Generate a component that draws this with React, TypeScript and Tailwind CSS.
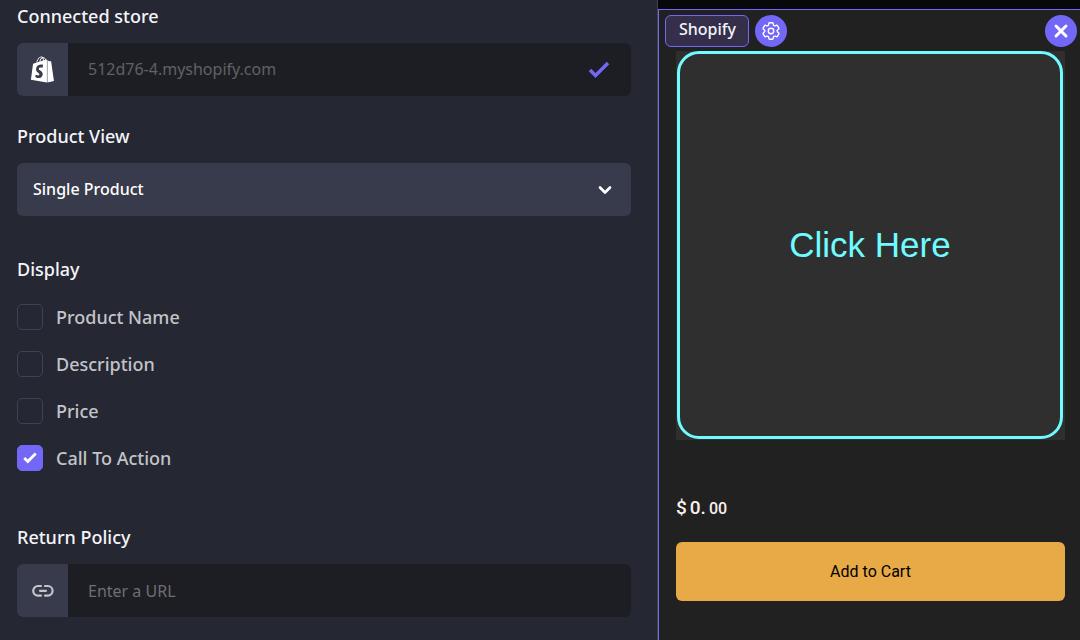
import { useState } from 'react'
import type { ReactNode } from 'react'
import { ChevronDown, X } from 'lucide-react'
import { FaShopify } from 'react-icons/fa'
import { HiOutlineCog6Tooth } from 'react-icons/hi2'

type DisplayKey = 'name' | 'description' | 'price' | 'cta'

const DISPLAY_OPTIONS: { key: DisplayKey; label: string }[] = [
  { key: 'name', label: 'Product Name' },
  { key: 'description', label: 'Description' },
  { key: 'price', label: 'Price' },
  { key: 'cta', label: 'Call To Action' },
]

function CheckMark({ className }: { className?: string }) {
  return (
    <svg viewBox="0 0 22 18" fill="none" stroke="currentColor" className={className} aria-hidden="true">
      <path d="M2 9.5 7.5 15 20 2.5" />
    </svg>
  )
}

function LinkIcon() {
  return (
    <svg
      viewBox="0 0 24 24"
      fill="none"
      stroke="currentColor"
      strokeWidth="2.2"
      strokeLinecap="round"
      className="size-6"
      aria-hidden="true"
    >
      <path d="M10 7H7a4.8 4.8 0 0 0 0 9.6H10M14 7h2.8a4.8 4.8 0 0 1 0 9.6H14M9 11.8h6" />
    </svg>
  )
}

interface IconFieldProps {
  id: string
  label: string
  icon: ReactNode
  children: ReactNode
}

function IconField({ id, label, icon, children }: IconFieldProps) {
  return (
    <div>
      <label htmlFor={id} className="block text-lg/6 font-medium text-[#f4f5fa]">
        {label}
      </label>
      <div className="mt-[15px] flex h-[53px] overflow-hidden rounded-md bg-[#1c1e24]">
        <div className="flex w-[51px] shrink-0 items-center justify-center bg-[#383b4b]">{icon}</div>
        {children}
      </div>
    </div>
  )
}

function SettingsPanel() {
  const [view, setView] = useState('single')
  const [returnUrl, setReturnUrl] = useState('')
  const [display, setDisplay] = useState<Record<DisplayKey, boolean>>({
    name: false,
    description: false,
    price: false,
    cta: true,
  })

  return (
    <form
      className="border-r border-[#42434b] bg-[#252732] pt-1 pr-[26px] pl-[17px]"
      onSubmit={(e) => e.preventDefault()}
    >
      <IconField id="store" label="Connected store" icon={<FaShopify className="size-[27px] text-white" />}>
        <input
          id="store"
          readOnly
          value="512d76-4.myshopify.com"
          className="min-w-0 flex-1 bg-transparent pb-0.5 pl-5 text-base text-[#606166] outline-none"
        />
        <CheckMark className="mr-[21px] w-[22px] stroke-[3.5] text-[#7367f8]" />
      </IconField>

      <div className="mt-7">
        <label htmlFor="view" className="block text-lg/6 font-medium text-[#f4f5fa]">
          Product View
        </label>
        <div className="relative mt-[15px]">
          <select
            id="view"
            value={view}
            onChange={(e) => setView(e.target.value)}
            className="block h-[53px] w-full appearance-none rounded-md bg-[#383b4b] px-4 pb-0.5 text-base font-medium text-white outline-none"
          >
            <option value="single">Single Product</option>
            <option value="collection">Collection</option>
          </select>
          <ChevronDown
            className="pointer-events-none absolute inset-y-0 right-4 my-auto size-5 text-white"
            strokeWidth={3.2}
          />
        </div>
      </div>

      <fieldset className="mt-[41px]">
        <legend className="block text-lg/6 font-medium text-[#f4f5fa]">Display</legend>
        <div className="mt-[23px] flex flex-col gap-[21px]">
          {DISPLAY_OPTIONS.map(({ key, label }) => (
            <label key={key} className="flex h-[26px] items-center gap-[13px] text-lg/6 font-medium text-[#c3c4c9]">
              <span className="relative size-[26px]">
                <input
                  type="checkbox"
                  checked={display[key]}
                  onChange={(e) => setDisplay({ ...display, [key]: e.target.checked })}
                  className="block size-[26px] appearance-none rounded-[5px] border border-[#3f4254] checked:border-[#7367f8] checked:bg-[#7367f8]"
                />
                {display[key] && (
                  <CheckMark className="pointer-events-none absolute inset-0 m-auto w-3.5 stroke-[4.5] text-white" />
                )}
              </span>
              {label}
            </label>
          ))}
        </div>
      </fieldset>

      <div className="mt-[54px]">
        <IconField
          id="return-policy"
          label="Return Policy"
          icon={
            <span className="text-[#c3c4c9]">
              <LinkIcon />
            </span>
          }
        >
          <input
            id="return-policy"
            placeholder="Enter a URL"
            value={returnUrl}
            onChange={(e) => setReturnUrl(e.target.value)}
            className="min-w-0 flex-1 bg-transparent px-5 text-base text-white outline-none placeholder:text-[#6f6f73]"
          />
        </IconField>
      </div>
    </form>
  )
}

function ProductPreview() {
  return (
    <div className="flex flex-col bg-[#060809] pt-[9px]">
      <section className="flex-1 border-t border-l border-[#7367f8] bg-[#212121] pt-[5px]">
        <header className="flex items-center gap-1.5 pr-[3px] pl-1.5">
          <span className="flex h-8 items-center rounded-md border border-[#7367f8] bg-[#352f4b] pr-3 pb-1 pl-[13px] text-base font-medium text-[#f4f5fa]">
            Shopify
          </span>
          <button
            type="button"
            aria-label="Settings"
            className="flex size-8 items-center justify-center rounded-full bg-[#7367f8] text-white"
          >
            <HiOutlineCog6Tooth className="size-[22px]" />
          </button>
          <button
            type="button"
            aria-label="Close"
            className="ml-auto flex size-8 items-center justify-center rounded-full bg-[#7367f8] text-white"
          >
            <X className="size-5" strokeWidth={3.5} />
          </button>
        </header>

        <div className="mt-1 pr-[15px] pl-[17px] font-['Roboto',sans-serif]">
          <a href="#product" className="block aspect-square bg-[#2f2f2f] pr-0.5 pb-px pl-px">
            <span className="flex h-full items-center justify-center rounded-[22px] border-3 border-[#6ffbff] font-['Liberation_Sans',Arial,sans-serif] text-[35px] text-[#6ffbff]">
              Click Here
            </span>
          </a>
          <p className="mt-14 flex items-baseline text-[19px]/6 font-medium text-[#fbefee]">
            <span className="mr-[3px]">$</span>
            <span className="mr-[3px]">0.</span>
            <span className="text-base/6">00</span>
          </p>
          <button
            type="button"
            className="mt-[21px] h-[59px] w-full rounded-md bg-[#e8a947] text-base text-black"
          >
            Add to Cart
          </button>
        </div>
      </section>
    </div>
  )
}

export default function App() {
  return (
    <main className="grid min-h-screen grid-cols-[658fr_422fr] font-['Noto_Sans',sans-serif]">
      <SettingsPanel />
      <ProductPreview />
    </main>
  )
}
